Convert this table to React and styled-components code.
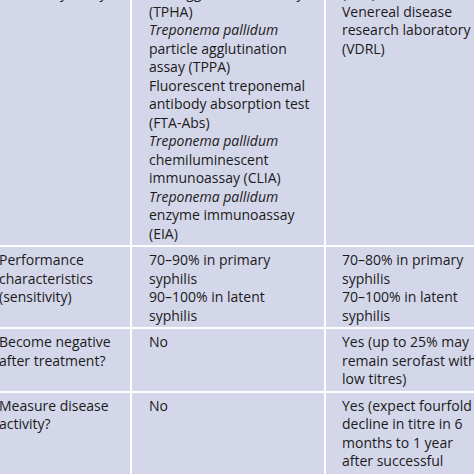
import React from "react";
import styled, { createGlobalStyle } from "styled-components";

const Global = createGlobalStyle`
  html, body {
    margin: 0;
    padding: 0;
    background: #d3d7e9;
    overflow: hidden;
  }
  #root {
    width: 474px;
    height: 474px;
    overflow: hidden;
  }
`;

const Grid = styled.div`
  display: grid;
  grid-template-columns: 148px 192px 172px;
  gap: 2px;
  background: #ffffff;
  margin-left: -18px;
  margin-top: -38.5px;
  width: max-content;
  font-family: "Open Sans", "Noto Sans", sans-serif;
  font-size: 14px;
  line-height: 18.5px;
  color: #1c1a1b;
`;

const Cell = styled.div`
  background: #d3d7e9;
  padding: 4px 12px 2px ${(p) => p.$pl}px;
`;

const Line = styled.div``;

const Em = styled.i`
  font-style: italic;
`;

const padLeft = [17, 17, 16];

const rows = [
  [
    ["Commonly used", "laboratory assay"],
    [
      <Em>Treponema pallidum</Em>,
      "hemagglutination assay",
      "(TPHA)",
      <Em>Treponema pallidum</Em>,
      "particle agglutination",
      "assay (TPPA)",
      "Fluorescent treponemal",
      "antibody absorption test",
      "(FTA-Abs)",
      <Em>Treponema pallidum</Em>,
      "chemiluminescent",
      "immunoassay (CLIA)",
      <Em>Treponema pallidum</Em>,
      "enzyme immunoassay",
      "(EIA)",
    ],
    [
      "Rapid plasma reagin",
      "(RPR)",
      "Venereal disease",
      "research laboratory",
      "(VDRL)",
    ],
  ],
  [
    ["Performance", "characteristics", "(sensitivity)"],
    ["70–90% in primary", "syphilis", "90–100% in latent", "syphilis"],
    ["70–80% in primary", "syphilis", "70–100% in latent", "syphilis"],
  ],
  [
    ["Become negative", "after treatment?"],
    ["No"],
    ["Yes (up to 25% may", "remain serofast with", "low titres)"],
  ],
  [
    ["Measure disease", "activity?"],
    ["No"],
    [
      "Yes (expect fourfold",
      "decline in titre in 6",
      "months to 1 year",
      "after successful",
      "treatment)",
    ],
  ],
];

export default function App() {
  return (
    <>
      <Global />
      <Grid>
        {rows.map((row, ri) =>
          row.map((cell, ci) => (
            <Cell key={`${ri}-${ci}`} $pl={padLeft[ci]}>
              {cell.map((l, li) => (
                <Line key={li}>{l}</Line>
              ))}
            </Cell>
          ))
        )}
      </Grid>
    </>
  );
}
